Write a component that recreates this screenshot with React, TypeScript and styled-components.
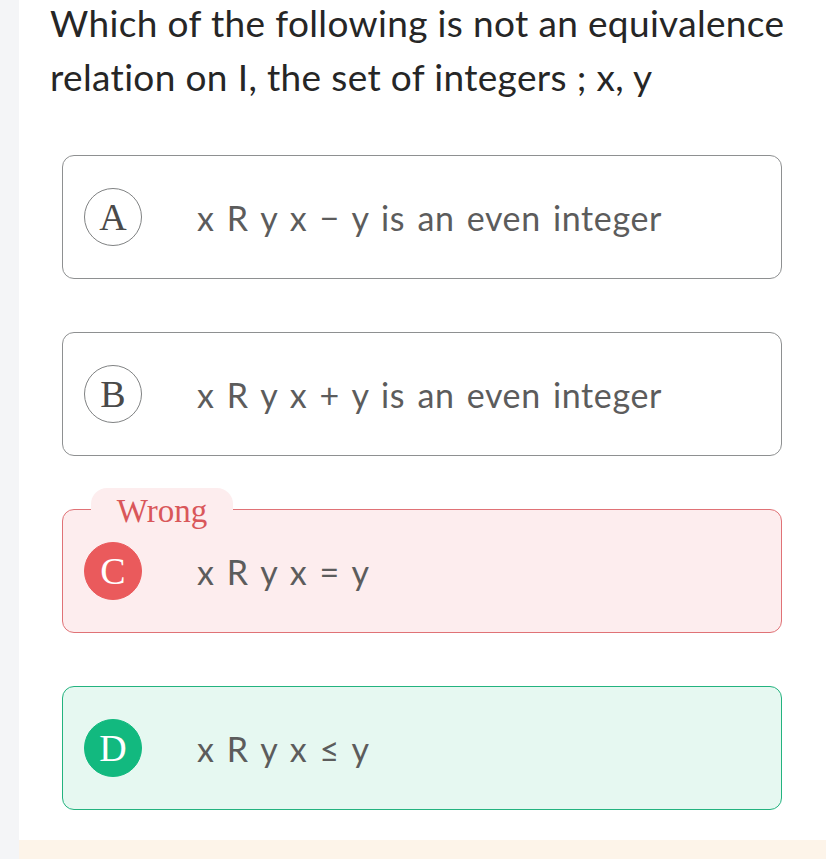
import { FC } from 'react';
import styled, { createGlobalStyle } from 'styled-components';

type Status = 'idle' | 'wrong' | 'correct';

interface OptionItem {
  letter: string;
  text: string;
  status: Status;
}

const questionLines = [
  'Which of the following is not an equivalence',
  'relation on I, the set of integers ; x, y',
];

const options: OptionItem[] = [
  { letter: 'A', text: 'x R y x − y is an even integer', status: 'idle' },
  { letter: 'B', text: 'x R y x + y is an even integer', status: 'idle' },
  { letter: 'C', text: 'x R y x = y', status: 'wrong' },
  { letter: 'D', text: 'x R y x ≤ y', status: 'correct' },
];

const palette = {
  idle: { bg: '#ffffff', border: '#8e9091', badge: 'transparent', letter: '#4a4a4a' },
  wrong: { bg: '#fdedee', border: '#e07276', badge: '#ea5a5c', letter: '#ffffff' },
  correct: { bg: '#e6f8f1', border: '#23b37f', badge: '#12b97f', letter: '#ffffff' },
};

const GlobalStyle = createGlobalStyle`
  html, body {
    margin: 0;
    padding: 0;
    background: #ffffff;
  }
  * {
    box-sizing: border-box;
  }
`;

const Page = styled.div`
  display: flex;
  width: 826px;
  height: 859px;
  overflow: hidden;
`;

const SideStrip = styled.div`
  width: 19px;
  flex-shrink: 0;
  background: #f4f5f7;
`;

const Main = styled.div`
  flex: 1;
  display: flex;
  flex-direction: column;
`;

const Content = styled.div`
  flex: 1;
  padding: 0 0 0 31px;
`;

const Question = styled.div`
  display: flex;
  flex-direction: column;
  gap: 9px;
  font-family: Lato, 'Noto Sans', sans-serif;
  font-size: 37px;
  color: #262626;
  letter-spacing: 0.35px;
`;

const QuestionLine = styled.div`
  line-height: 45px;
  white-space: nowrap;
`;

const OptionList = styled.div`
  display: flex;
  flex-direction: column;
  gap: 53px;
  margin: 56px 0 0 12px;
  width: 720px;
`;

const OptionBox = styled.div<{ $status: Status }>`
  position: relative;
  display: flex;
  align-items: center;
  height: 124px;
  padding: 0 0 0 21px;
  border: 1.5px solid ${({ $status }) => palette[$status].border};
  border-radius: 12px;
  background: ${({ $status }) => palette[$status].bg};
`;

const Badge = styled.div<{ $status: Status }>`
  width: 58px;
  height: 58px;
  flex-shrink: 0;
  display: flex;
  align-items: center;
  justify-content: center;
  border-radius: 50%;
  border: 1.2px solid
    ${({ $status }) => ($status === 'idle' ? '#808283' : palette[$status].badge)};
  background: ${({ $status }) => palette[$status].badge};
  color: ${({ $status }) => palette[$status].letter};
  font-family: 'Liberation Serif', 'DejaVu Serif', serif;
  font-size: 38px;
  line-height: 1;
`;

const OptionText = styled.div`
  margin-left: 55px;
  font-family: Lato, 'Noto Sans', sans-serif;
  font-size: 34px;
  color: #5c5c5c;
  letter-spacing: 0.6px;
  word-spacing: 3px;
`;

const WrongTab = styled.div`
  position: absolute;
  left: 28px;
  top: -22px;
  width: 142px;
  height: 32px;
  padding-top: 5px;
  border-radius: 16px 16px 0 0;
  background: #fdedee;
  color: #d9575a;
  font-family: 'Liberation Serif', 'DejaVu Serif', serif;
  font-size: 33px;
  line-height: 36px;
  text-align: center;
`;

const BottomStrip = styled.div`
  height: 19px;
  background: #fdf4e9;
`;

const App: FC = () => (
  <>
    <GlobalStyle />
    <Page>
      <SideStrip />
      <Main>
        <Content>
          <Question>
            {questionLines.map((line) => (
              <QuestionLine key={line}>{line}</QuestionLine>
            ))}
          </Question>
          <OptionList>
            {options.map((option) => (
              <OptionBox key={option.letter} $status={option.status}>
                {option.status === 'wrong' && <WrongTab>Wrong</WrongTab>}
                <Badge $status={option.status}>{option.letter}</Badge>
                <OptionText>{option.text}</OptionText>
              </OptionBox>
            ))}
          </OptionList>
        </Content>
        <BottomStrip />
      </Main>
    </Page>
  </>
);

export default App;
